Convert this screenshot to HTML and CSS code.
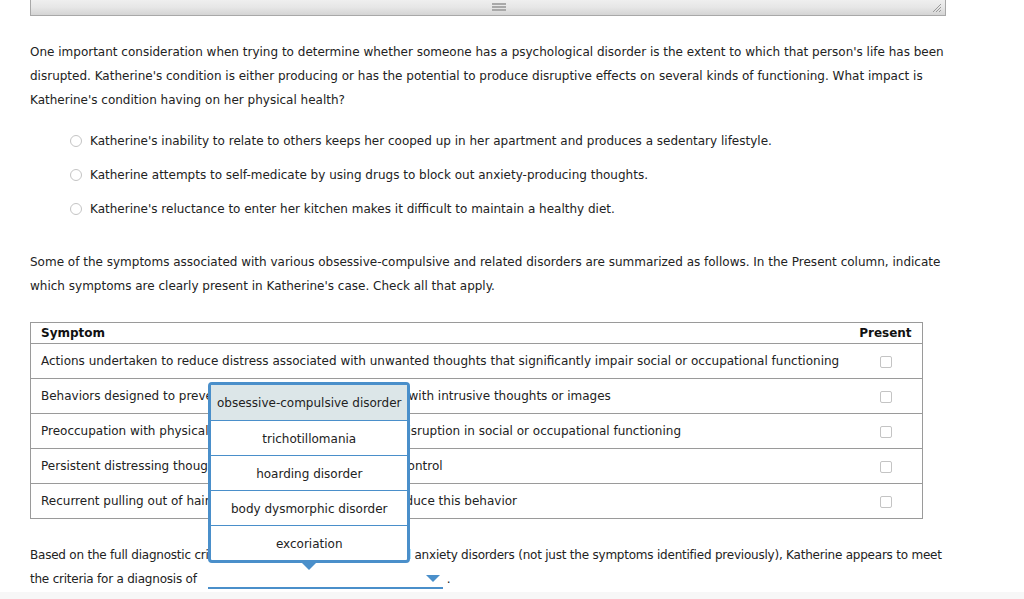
FILE: index.html
```html
<!DOCTYPE html>
<html lang="en">
<head>
    <meta charset="UTF-8">
    <title>Question</title>
    <link rel="stylesheet" href="styles.css">
</head>
<body>
    <div class="page">
        <div class="notes">
            <span class="grip"><i></i><i></i><i></i></span>
            <svg class="resize" width="10" height="10" viewBox="0 0 10 10">
                <path d="M9 1 L1 9 M9 4 L4 9 M9 7 L7 9" stroke="#999" stroke-width="1"/>
            </svg>
        </div>

        <p class="text">One important consideration when trying to determine whether someone has a psychological disorder is the extent to which that person's life has been disrupted. Katherine's condition is either producing or has the potential to produce disruptive effects on several kinds of functioning. What impact is Katherine's condition having on her physical health?</p>

        <ul class="options">
            <li><span class="radio"></span>Katherine's inability to relate to others keeps her cooped up in her apartment and produces a sedentary lifestyle.</li>
            <li><span class="radio"></span>Katherine attempts to self-medicate by using drugs to block out anxiety-producing thoughts.</li>
            <li><span class="radio"></span>Katherine's reluctance to enter her kitchen makes it difficult to maintain a healthy diet.</li>
        </ul>

        <p class="text second">Some of the symptoms associated with various obsessive-compulsive and related disorders are summarized as follows. In the Present column, indicate which symptoms are clearly present in Katherine's case. Check all that apply.</p>

        <table class="symptoms">
            <tr><th>Symptom</th><th class="present">Present</th></tr>
            <tr><td>Actions undertaken to reduce distress associated with unwanted thoughts that significantly impair social or occupational functioning</td><td class="check"><span class="box"></span></td></tr>
            <tr><td>Behaviors designed to prevent or reduce distress associated with intrusive thoughts or images</td><td class="check"><span class="box"></span></td></tr>
            <tr><td>Preoccupation with physical flaws that results in significant disruption in social or occupational functioning</td><td class="check"><span class="box"></span></td></tr>
            <tr><td>Persistent distressing thoughts that the person attempts to control</td><td class="check"><span class="box"></span></td></tr>
            <tr><td>Recurrent pulling out of hair despite repeated attempts to reduce this behavior</td><td class="check"><span class="box"></span></td></tr>
        </table>

        <p class="text third">Based on the full diagnostic criteria for obsessive-compulsive and anxiety disorders (not just the symptoms identified previously), Katherine appears to meet the criteria for a diagnosis of <span class="select"><span class="caret"></span><span class="menu">
                <span class="item active">obsessive-compulsive disorder</span>
                <span class="item">trichotillomania</span>
                <span class="item">hoarding disorder</span>
                <span class="item">body dysmorphic disorder</span>
                <span class="item">excoriation</span>
            </span></span> .</p>
    </div>
    <div class="footer"></div>
</body>
</html>
```

FILE: styles.css
```css
* {
    box-sizing: border-box;
    margin: 0;
    padding: 0;
}
body {
    font-family: "DejaVu Sans", Verdana, sans-serif;
    font-size: 12px;
    color: #222;
    background: #fff;
}
.page {
    padding: 0 60px 0 30px;
}
.notes {
    position: relative;
    height: 16px;
    width: 916px;
    background: linear-gradient(#efefef, #e6e6e6 50%, #d4d4d4);
    border: 1px solid #a8a8a8;
    border-top: none;
}
.grip {
    position: absolute;
    left: 461px;
    top: 3px;
    width: 14px;
}
.grip i {
    display: block;
    height: 2px;
    margin-bottom: 1px;
    background: #a9a9a9;
}
.resize {
    position: absolute;
    right: 3px;
    bottom: 2px;
}
.text {
    line-height: 24px;
    margin-top: 24px;
    width: 916px;
}
.options {
    list-style: none;
    margin: 17px 0 0 40px;
}
.options li {
    display: flex;
    align-items: center;
    height: 24px;
    margin-bottom: 10px;
}
.radio {
    width: 12px;
    height: 12px;
    border: 1px solid #c4c4c4;
    border-radius: 50%;
    margin-right: 8px;
}
.second {
    margin-top: 29px;
}
.symptoms {
    margin-top: 24px;
    width: 891px;
    border-collapse: collapse;
    border: 1px solid #9a9a9a;
}
.symptoms th {
    text-align: left;
    height: 21px;
    padding: 0 10px;
    font-weight: bold;
    color: #111;
    border-bottom: 1px solid #9a9a9a;
}
.symptoms th.present {
    text-align: right;
}
.symptoms td {
    height: 35px;
    padding: 0 10px;
    white-space: nowrap;
    border-bottom: 1px solid #9a9a9a;
}
.symptoms td.check {
    text-align: right;
    padding-right: 30px;
}
.box {
    display: inline-block;
    width: 12px;
    height: 12px;
    border: 1px solid #c4c4c4;
    border-radius: 2px;
    vertical-align: middle;
}
.third {
    margin-top: 24px;
    width: 920px;
    letter-spacing: -0.22px;
}
.select {
    position: relative;
    display: inline-block;
    width: 235px;
    height: 18px;
    vertical-align: -6px;
    margin-left: 8px;
    border-bottom: 2px solid #4a8fca;
    letter-spacing: 0;
}
.caret {
    position: absolute;
    right: 3px;
    top: 4px;
    border-left: 7px solid transparent;
    border-right: 7px solid transparent;
    border-top: 7px solid #4a8fca;
}
.menu {
    position: absolute;
    left: 0;
    bottom: 24px;
    width: 202px;
    display: flex;
    flex-direction: column;
    background: #fff;
    border: 3px solid #4a8fca;
    border-radius: 4px;
    line-height: 20px;
    white-space: nowrap;
}
.menu::after {
    content: "";
    position: absolute;
    left: 90px;
    bottom: -10px;
    border-left: 8px solid transparent;
    border-right: 8px solid transparent;
    border-top: 8px solid #4a8fca;
}
.item {
    display: flex;
    align-items: center;
    justify-content: center;
    height: 35px;
    padding-top: 1px;
    border-top: 1px solid #4a8fca;
    color: #222;
}
.item:first-child {
    border-top: none;
}
.item.active {
    background: #dce6e8;
}
.footer {
    height: 20px;
    margin-top: 1px;
    background: #f7f7f7;
}
```
